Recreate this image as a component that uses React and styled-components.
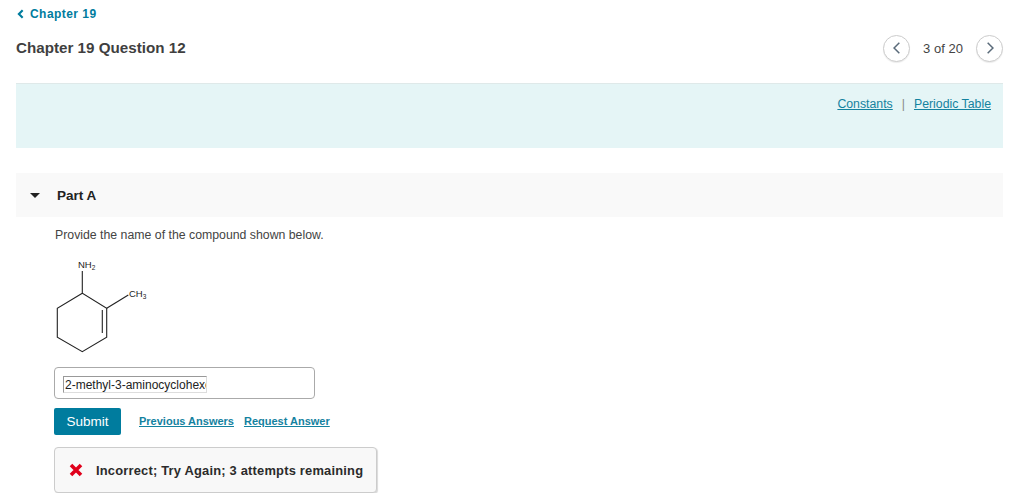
import React from 'react';
import styled, { createGlobalStyle } from 'styled-components';

const GlobalStyle = createGlobalStyle`
  html, body {
    margin: 0;
    padding: 0;
    background: #fff;
    overflow: hidden;
  }
  body {
    font-family: "Liberation Sans", Arial, sans-serif;
    color: #333;
  }
`;

const Page = styled.div`
  width: 1024px;
  height: 493px;
  padding: 0 21px 0 16px;
  box-sizing: border-box;
  overflow: hidden;
`;

const BackLink = styled.a`
  display: flex;
  align-items: center;
  gap: 4px;
  height: 14px;
  margin-top: 7px;
  color: #007c9e;
  font-size: 12px;
  font-weight: bold;
  letter-spacing: 0.45px;
`;

const TitleRow = styled.div`
  display: flex;
  align-items: center;
  justify-content: space-between;
  margin-top: 13px;
  height: 28px;
`;

const Title = styled.h1`
  margin: 0 0 2px;
  font-size: 15.2px;
  font-weight: bold;
  color: #3f3f3f;
`;

const Pager = styled.div`
  display: flex;
  align-items: center;
`;

const PagerButton = styled.button`
  width: 27px;
  height: 27px;
  padding: 0;
  display: flex;
  align-items: center;
  justify-content: center;
  background: #fff;
  border: 1px solid #ccc;
  border-radius: 50%;
  box-shadow: 0 1px 1px rgba(0, 0, 0, 0.08);
`;

const PagerText = styled.span`
  width: 66px;
  text-align: center;
  font-size: 13px;
  color: #444;
`;

const InfoPanel = styled.div`
  display: flex;
  justify-content: flex-end;
  margin-top: 21px;
  height: 65px;
  padding: 13px 12px 0 0;
  box-sizing: border-box;
  background: #e5f5f6;
  border-top: 1px solid #dfe9e9;
  font-size: 12.3px;
`;

const InfoLink = styled.a`
  color: #14829f;
  text-decoration: underline;
  height: 14px;
`;

const Divider = styled.span`
  margin: 0 9px;
  color: #888;
`;

const PartHeader = styled.div`
  display: flex;
  align-items: center;
  margin-top: 25px;
  height: 44px;
  padding-left: 14px;
  background: #f9f9f9;
`;

const Caret = styled.span`
  width: 0;
  height: 0;
  border-left: 5px solid transparent;
  border-right: 5px solid transparent;
  border-top: 5px solid #222;
  margin-right: 17px;
`;

const PartTitle = styled.h2`
  margin: 0;
  font-size: 13.5px;
  font-weight: bold;
  color: #222;
`;

const PartBody = styled.div`
  padding: 11px 0 0 38px;
`;

const Prompt = styled.p`
  margin: 0 0 0 1px;
  font-size: 12.3px;
  line-height: 14px;
  color: #444;
`;

const Molecule = styled.svg`
  display: block;
  width: 110px;
  height: 105px;
  margin-top: 16px;

  text {
    font-family: "Liberation Sans", Arial, sans-serif;
    font-size: 9.5px;
    fill: #222;
  }
  tspan.sub {
    font-size: 6.5px;
  }
`;

const AnswerBox = styled.div`
  width: 261px;
  height: 32px;
  margin-top: 4px;
  padding: 8px 0 0 8px;
  box-sizing: border-box;
  border: 1px solid #aaa;
  border-radius: 4px;
`;

const AnswerInput = styled.input`
  display: block;
  width: 144px;
  height: 17px;
  padding: 0 0 0 1px;
  box-sizing: border-box;
  border: 1px solid #999;
  border-right-color: #ddd;
  border-bottom-color: #ddd;
  font-family: "Liberation Sans", Arial, sans-serif;
  font-size: 12px;
  color: #222;
  outline: none;
`;

const ActionRow = styled.div`
  display: flex;
  align-items: flex-start;
  margin-top: 9px;
`;

const SubmitButton = styled.button`
  width: 67px;
  height: 27px;
  padding: 0;
  background: #007c9e;
  border: none;
  border-radius: 2px;
  color: #fff;
  font-family: "Liberation Sans", Arial, sans-serif;
  font-size: 13.5px;
  margin-right: 18px;
`;

const ActionLink = styled.a`
  margin-right: 10px;
  margin-top: 7px;
  font-size: 11px;
  font-weight: bold;
  color: #14829f;
  text-decoration: underline;
`;

const Feedback = styled.div`
  display: flex;
  align-items: center;
  width: 323px;
  height: 46px;
  margin-top: 12px;
  padding-left: 14px;
  box-sizing: border-box;
  background: #f8f8f8;
  border: 1px solid #ccc;
  border-radius: 4px;
  box-shadow: 1px 1px 1px rgba(0, 0, 0, 0.15);
`;

const FeedbackText = styled.span`
  margin-left: 13px;
  font-size: 12.9px;
  font-weight: bold;
  letter-spacing: 0.2px;
  color: #2b2b2b;
`;

const Chevron = ({ dir, size = 12, color = '#5a6b7a', width = 1.3 }) => (
  <svg width={size} height={size} viewBox="0 0 12 12" fill="none">
    <path
      d={dir === 'left' ? 'M8 1.5 L3.5 6 L8 10.5' : 'M4 1.5 L8.5 6 L4 10.5'}
      stroke={color}
      strokeWidth={width}
    />
  </svg>
);

const CrossIcon = () => (
  <svg width="14" height="14" viewBox="0 0 14 14">
    <path d="M2 2 L12 12 M12 2 L2 12" stroke="#e0001b" strokeWidth="3.6" />
  </svg>
);

export default function App() {
  return (
    <Page>
      <GlobalStyle />
      <BackLink>
        <Chevron dir="left" size={10} color="#007c9e" width={2.6} />
        Chapter 19
      </BackLink>
      <TitleRow>
        <Title>Chapter 19 Question 12</Title>
        <Pager>
          <PagerButton><Chevron dir="left" size={14} /></PagerButton>
          <PagerText>3 of 20</PagerText>
          <PagerButton><Chevron dir="right" size={14} /></PagerButton>
        </Pager>
      </TitleRow>
      <InfoPanel>
        <InfoLink>Constants</InfoLink>
        <Divider>|</Divider>
        <InfoLink>Periodic Table</InfoLink>
      </InfoPanel>
      <PartHeader>
        <Caret />
        <PartTitle>Part A</PartTitle>
      </PartHeader>
      <PartBody>
        <Prompt>Provide the name of the compound shown below.</Prompt>
        <Molecule viewBox="0 0 110 105">
          <g fill="none" stroke="#222" strokeWidth="1.1">
            <path d="M28.3 13 V35.3 L52.7 50.3 V79.3 L28.3 93.7 L3.3 79.3 V50.3 L28.3 35.3" />
            <path d="M48.3 52 V75" />
            <path d="M52.7 50.3 L74.3 37" />
          </g>
          <text x="24" y="10">NH<tspan className="sub" dy="2">2</tspan></text>
          <text x="75" y="39">CH<tspan className="sub" dy="2">3</tspan></text>
        </Molecule>
        <AnswerBox>
          <AnswerInput readOnly value="2-methyl-3-aminocyclohexene" />
        </AnswerBox>
        <ActionRow>
          <SubmitButton>Submit</SubmitButton>
          <ActionLink>Previous Answers</ActionLink>
          <ActionLink>Request Answer</ActionLink>
        </ActionRow>
        <Feedback>
          <CrossIcon />
          <FeedbackText>Incorrect; Try Again; 3 attempts remaining</FeedbackText>
        </Feedback>
      </PartBody>
    </Page>
  );
}
